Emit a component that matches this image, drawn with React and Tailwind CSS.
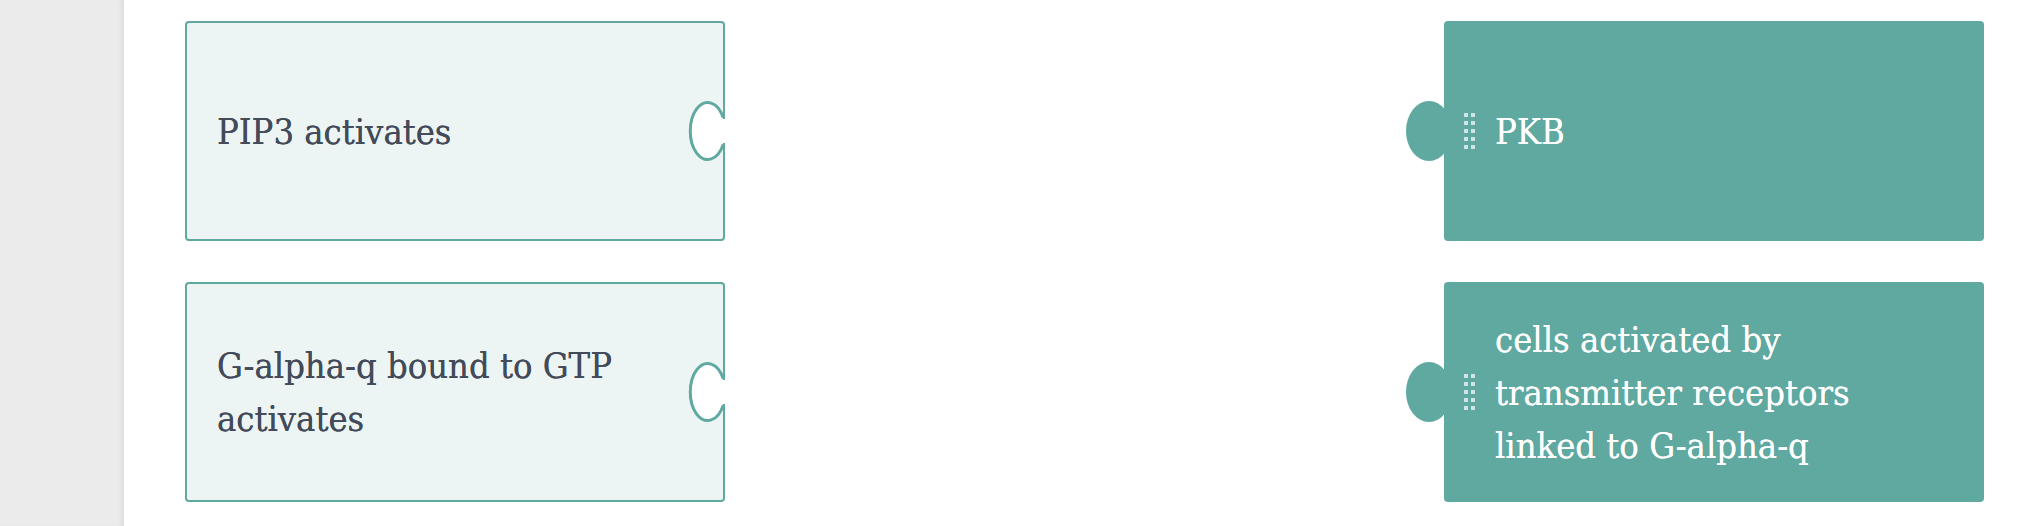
import React from 'react';

const font = { fontFamily: '"Roboto Slab", "DejaVu Serif Condensed", "DejaVu Serif", serif' };

const rows = [
  { left: 'PIP3 activates', right: 'PKB' },
  { left: 'G-alpha-q bound to GTP activates', right: 'cells activated by transmitter receptors linked to G-alpha-q' },
];

// half-open socket on the right edge of a premise card
function Socket() {
  return (
    <svg
      width="40"
      height="62"
      viewBox="0 0 40 62"
      className="absolute right-[-2px] top-1/2 -translate-y-1/2"
    >
      <path d="M36.9 19 A17.5 28.5 0 1 0 36.9 43 L40 43 L40 19 Z" fill="#ffffff" />
      <path d="M38.2 17.6 A17.5 28.5 0 1 0 38.2 44.4" fill="none" stroke="#5fa9a1" strokeWidth="3" />
    </svg>
  );
}

function Handle() {
  return (
    <div className="grid grid-cols-2 gap-x-[3px] gap-y-[4px] shrink-0">
      {Array.from({ length: 10 }).map((_, i) => (
        <span key={i} className="w-[4px] h-[4px] bg-white/70" />
      ))}
    </div>
  );
}

export default function App() {
  return (
    <div className="flex min-h-screen bg-white" style={font}>
      {/* barra lateral */}
      <div className="w-[124px] shrink-0 bg-[#ebebeb] shadow-[inset_-5px_0_5px_-3px_rgba(0,0,0,0.07)]" />

      <div className="flex-1 pl-[61px] pr-[52px] pt-[21px] flex flex-col gap-[41px]">
        {rows.map((r) => (
          <div key={r.right} className="flex justify-between">
            <div className="relative w-[540px] h-[220px] bg-[#edf5f4] border-2 border-[#5fa9a1] rounded-[4px] flex items-center pl-[30px] pr-[60px]">
              <span className="text-[36px] leading-[53px] text-[#434b5a] [text-shadow:0_0_0.4px_#434b5a]">{r.left}</span>
              <Socket />
            </div>

            <div className="relative w-[540px] h-[220px] bg-[#5fa9a1] rounded-[4px] flex items-center pl-[20px] pr-[40px] gap-[20px]">
              <span className="absolute left-[-38px] top-1/2 -translate-y-1/2 w-[46px] h-[60px] rounded-[50%] bg-[#5fa9a1]" />
              <Handle />
              <span className="relative text-[36px] leading-[53px] text-white [text-shadow:0_0_0.4px_#ffffff]">{r.right}</span>
            </div>
          </div>
        ))}
      </div>
    </div>
  );
}
